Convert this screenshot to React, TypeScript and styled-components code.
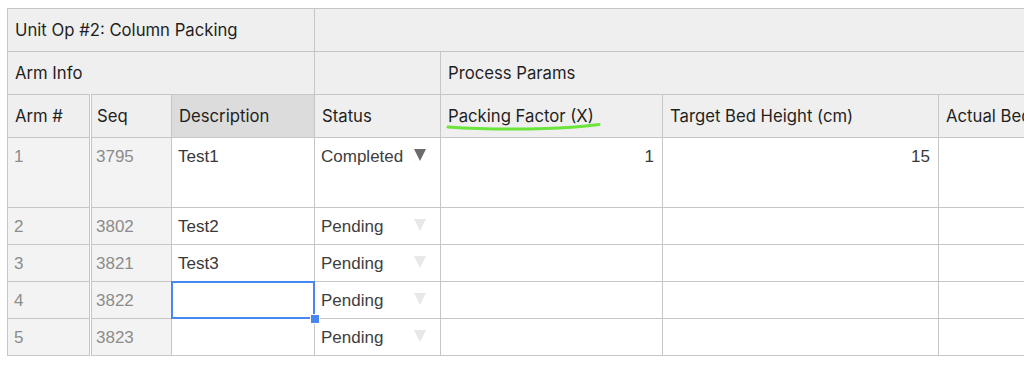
import styled, { createGlobalStyle } from 'styled-components';

interface ArmRow {
  arm: number;
  seq: number;
  description: string;
  status: string;
  packingFactor?: number;
  targetBedHeight?: number;
  tall?: boolean;
}

const rows: ArmRow[] = [
  { arm: 1, seq: 3795, description: 'Test1', status: 'Completed', packingFactor: 1, targetBedHeight: 15, tall: true },
  { arm: 2, seq: 3802, description: 'Test2', status: 'Pending' },
  { arm: 3, seq: 3821, description: 'Test3', status: 'Pending' },
  { arm: 4, seq: 3822, description: '', status: 'Pending' },
  { arm: 5, seq: 3823, description: '', status: 'Pending' }
];

const GlobalStyle = createGlobalStyle`
  html, body {
    margin: 0;
    padding: 0;
    background: #ffffff;
    overflow: hidden;
  }
`;

const PageStyled = styled.div`
  width: 1024px;
  height: 378px;
  overflow: hidden;
  padding: 8px 0 0 7px;
  box-sizing: border-box;
`;

const TableStyled = styled.table`
  border-collapse: collapse;
  table-layout: fixed;
  width: 1240px;
  border: 1px solid #c6c6c6;
`;

const HeadCell = styled.th<{ $dark?: boolean }>`
  position: relative;
  height: 42px;
  padding: 0 7px;
  text-align: left;
  vertical-align: middle;
  font-family: Inter, 'Open Sans', sans-serif;
  font-size: 16.7px;
  font-weight: 400;
  color: #1f1f1f;
  white-space: nowrap;
  overflow: hidden;
  background: ${(p) => (p.$dark ? '#dcdcdc' : '#efefef')};
  border: 1px solid #c6c6c6;
`;

const ArmHeadCell = styled(HeadCell)`
  border-right: 3px double #c6c6c6;
`;

const BodyRow = styled.tr<{ $tall?: boolean }>`
  height: ${(p) => (p.$tall ? '70px' : '37px')};
`;

const DataCell = styled.td<{ $gray?: boolean; $align?: 'left' | 'right' }>`
  position: relative;
  padding: 9px 8px 0 6px;
  vertical-align: top;
  text-align: ${(p) => p.$align || 'left'};
  font-family: 'Liberation Sans', Arial, sans-serif;
  font-size: 17px;
  line-height: 19px;
  color: ${(p) => (p.$gray ? '#8c8c8c' : '#383838')};
  background: ${(p) => (p.$gray ? '#f3f3f3' : '#ffffff')};
  border: 1px solid #c6c6c6;
  white-space: nowrap;
  overflow: hidden;
`;

const ArmCell = styled(DataCell)`
  border-right: 3px double #c6c6c6;
`;

const SeqCell = styled(DataCell)`
  padding-left: 4px;
`;

const SeqHeadCell = styled(HeadCell)`
  padding-left: 5px;
`;

const SelectedCell = styled(DataCell)<{ $selected?: boolean }>`
  overflow: visible;
  &::after {
    content: '';
    display: ${(p) => (p.$selected ? 'block' : 'none')};
    position: absolute;
    left: -1px;
    top: -1px;
    right: -1px;
    bottom: -1px;
    border: 2px solid #4a86f2;
    pointer-events: none;
  }
`;

const Handle = styled.span`
  position: absolute;
  right: -6px;
  bottom: -6px;
  width: 8px;
  height: 8px;
  background: #4a86f2;
  border: 1px solid #ffffff;
  z-index: 2;
`;

const StatusBox = styled.div`
  display: flex;
  justify-content: space-between;
  align-items: flex-start;
  color: #3e3e3e;
`;

const Caret = styled.span<{ $active?: boolean }>`
  width: 0;
  height: 0;
  margin-top: 2px;
  margin-right: 6px;
  border-left: 6px solid transparent;
  border-right: 6px solid transparent;
  border-top: 12px solid ${(p) => (p.$active ? '#6b6b6b' : '#e8e8e8')};
`;

const Underline = styled.svg`
  position: absolute;
  left: 5px;
  top: 26px;
  pointer-events: none;
`;

const App = () => {
  return (
    <PageStyled>
      <GlobalStyle />
      <TableStyled>
        <colgroup>
          <col style={{ width: 83 }} />
          <col style={{ width: 81 }} />
          <col style={{ width: 143 }} />
          <col style={{ width: 126 }} />
          <col style={{ width: 222 }} />
          <col style={{ width: 276 }} />
          <col style={{ width: 309 }} />
        </colgroup>
        <thead>
          <tr>
            <HeadCell colSpan={3}>Unit Op #2: Column Packing</HeadCell>
            <HeadCell colSpan={4} />
          </tr>
          <tr>
            <HeadCell colSpan={3}>Arm Info</HeadCell>
            <HeadCell />
            <HeadCell colSpan={3}>Process Params</HeadCell>
          </tr>
          <tr>
            <ArmHeadCell>Arm #</ArmHeadCell>
            <SeqHeadCell>Seq</SeqHeadCell>
            <HeadCell $dark>Description</HeadCell>
            <HeadCell>Status</HeadCell>
            <HeadCell>
              Packing Factor (X)
              <Underline width="156" height="10" viewBox="0 0 156 10">
                <path
                  d="M2 6 C 30 8, 70 8.5, 100 7.5 S 140 5, 153 3.5"
                  stroke="#6be43c"
                  strokeWidth="3"
                  fill="none"
                  strokeLinecap="round"
                />
              </Underline>
            </HeadCell>
            <HeadCell>Target Bed Height (cm)</HeadCell>
            <HeadCell>Actual Bed Height (cm)</HeadCell>
          </tr>
        </thead>
        <tbody>
          {rows.map((row, ix) => {
            const selected = ix === 3;
            return (
              <BodyRow key={`${ix}-${row.seq}`} $tall={row.tall}>
                <ArmCell $gray>{row.arm}</ArmCell>
                <SeqCell $gray>{row.seq}</SeqCell>
                <SelectedCell $selected={selected}>
                  {row.description}
                  {selected && <Handle />}
                </SelectedCell>
                <DataCell>
                  <StatusBox>
                    {row.status}
                    <Caret $active={row.status === 'Completed'} />
                  </StatusBox>
                </DataCell>
                <DataCell $align="right">{row.packingFactor}</DataCell>
                <DataCell $align="right">{row.targetBedHeight}</DataCell>
                <DataCell />
              </BodyRow>
            );
          })}
        </tbody>
      </TableStyled>
    </PageStyled>
  );
};

export default App;
